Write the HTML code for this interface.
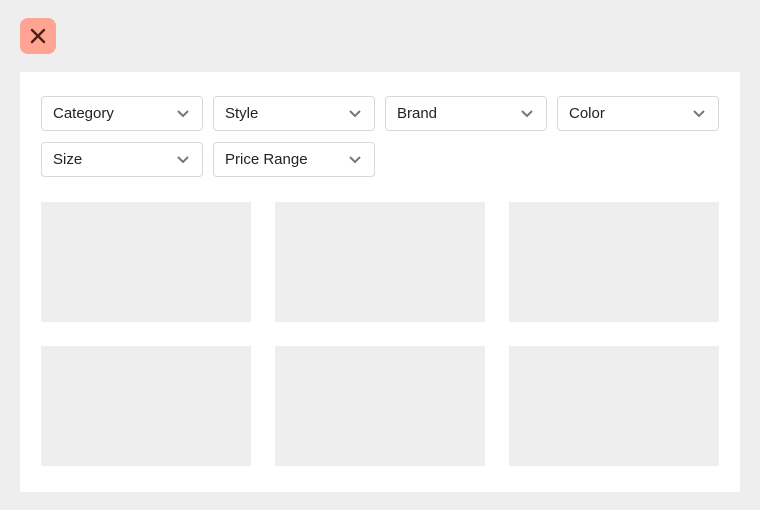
<!DOCTYPE html>
<html><head><style>
body{margin:0;width:760px;height:510px;background:#eeeeee;font-family:"Liberation Sans",sans-serif;position:relative;overflow:hidden}
.x{position:absolute;left:20px;top:18px;width:36px;height:36px;border-radius:8px;background:#ffa493}
.x svg{position:absolute;left:9px;top:9px}
.panel{position:absolute;left:20px;top:72px;width:720px;height:420px;background:#fff}
.sel{position:absolute;width:162px;height:35px;border:1px solid #d8d8d8;border-radius:4px;box-sizing:border-box;background:#fff;font-size:15px;color:#222;line-height:34px;padding-left:11px}
.sel svg{position:absolute;right:13px;top:13px}
.card{position:absolute;width:210px;height:120px;background:#eeeeee}
</style></head><body>
<div class="x"><svg width="18" height="18" viewBox="0 0 18 18"><path d="M3 3L15 15M15 3L3 15" stroke="#4a1f16" stroke-width="2.4" stroke-linecap="round"/></svg></div>
<div class="panel">
<div class="sel" style="left:21px;top:24px">Category<svg width="12" height="8" viewBox="0 0 12 8"><path d="M1 1l5 5 5-5" fill="none" stroke="#777" stroke-width="2"/></svg></div>
<div class="sel" style="left:193px;top:24px">Style<svg width="12" height="8" viewBox="0 0 12 8"><path d="M1 1l5 5 5-5" fill="none" stroke="#777" stroke-width="2"/></svg></div>
<div class="sel" style="left:365px;top:24px">Brand<svg width="12" height="8" viewBox="0 0 12 8"><path d="M1 1l5 5 5-5" fill="none" stroke="#777" stroke-width="2"/></svg></div>
<div class="sel" style="left:537px;top:24px">Color<svg width="12" height="8" viewBox="0 0 12 8"><path d="M1 1l5 5 5-5" fill="none" stroke="#777" stroke-width="2"/></svg></div>
<div class="sel" style="left:21px;top:70px">Size<svg width="12" height="8" viewBox="0 0 12 8"><path d="M1 1l5 5 5-5" fill="none" stroke="#777" stroke-width="2"/></svg></div>
<div class="sel" style="left:193px;top:70px">Price Range<svg width="12" height="8" viewBox="0 0 12 8"><path d="M1 1l5 5 5-5" fill="none" stroke="#777" stroke-width="2"/></svg></div>
<div class="card" style="left:21px;top:130px"></div>
<div class="card" style="left:255px;top:130px"></div>
<div class="card" style="left:489px;top:130px"></div>
<div class="card" style="left:21px;top:274px"></div>
<div class="card" style="left:255px;top:274px"></div>
<div class="card" style="left:489px;top:274px"></div>
</div>
</body></html>
